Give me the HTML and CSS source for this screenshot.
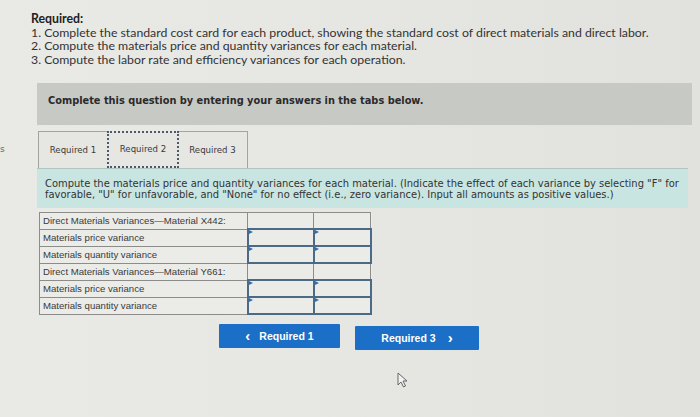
FILE: index.html
```html
<!DOCTYPE html>
<html>
<head>
<meta charset="utf-8">
<link rel="stylesheet" href="styles.css">
</head>
<body>
<div class="page">
  <div class="required">
    <div class="req-title">Required:</div>
    <div>1. Complete the standard cost card for each product, showing the standard cost of direct materials and direct labor.</div>
    <div>2. Compute the materials price and quantity variances for each material.</div>
    <div>3. Compute the labor rate and efficiency variances for each operation.</div>
  </div>
  <div class="main">
    <div class="side"><span class="side-text">s</span></div>
    <div class="card">
      <div class="banner">Complete this question by entering your answers in the tabs below.</div>
      <div class="tabs">
        <div class="tab">Required 1</div>
        <div class="tab active">Required 2</div>
        <div class="tab">Required 3</div>
      </div>
      <div class="instr">Compute the materials price and quantity variances for each material. (Indicate the effect of each variance by selecting "F" for favorable, "U" for unfavorable, and "None" for no effect (i.e., zero variance). Input all amounts as positive values.)</div>
      <table class="grid">
        <tr class="head"><td class="lbl">Direct Materials Variances—Material X442:</td><td></td><td></td></tr>
        <tr class="inp"><td class="lbl">Materials price variance</td><td class="in"><i></i></td><td class="in"><i></i></td></tr>
        <tr class="inp"><td class="lbl">Materials quantity variance</td><td class="in"><i></i></td><td class="in"><i></i></td></tr>
        <tr class="head"><td class="lbl">Direct Materials Variances—Material Y661:</td><td></td><td></td></tr>
        <tr class="inp"><td class="lbl">Materials price variance</td><td class="in"><i></i></td><td class="in"><i></i></td></tr>
        <tr class="inp"><td class="lbl">Materials quantity variance</td><td class="in"><i></i></td><td class="in"><i></i></td></tr>
      </table>
      <div class="navs">
        <div class="btn"><span class="chev">&lsaquo;</span><span>Required 1</span></div>
        <div class="btn"><span>Required 3</span><span class="chev">&rsaquo;</span></div>
      </div>
    </div>
  </div>
  <svg class="cursor" width="12" height="16" viewBox="0 0 12 16"><path d="M1 1 L1 13 L4 10 L6.5 15 L8.5 14 L6 9 L10 9 Z" fill="#f2f2f2" stroke="#666" stroke-width="1"/></svg>
</div>
</body>
</html>
```

FILE: styles.css
```css
html, body {
  margin: 0;
  padding: 0;
}
body {
  width: 700px;
  height: 417px;
  overflow: hidden;
  background: linear-gradient(90deg, #e9e9e6 0%, #e6e6e3 50%, #e1e1de 100%);
}
.page {
  position: relative;
  height: 417px;
  padding-top: 12px;
  box-sizing: border-box;
}
.required {
  padding-left: 31px;
  font-family: Lato, "Open Sans", sans-serif;
  font-size: 12.3px;
  line-height: 13.7px;
  color: #333;
}
.req-title {
  font-weight: bold;
  color: #222;
}
.main {
  display: flex;
  margin-top: 16px;
}
.side {
  width: 37px;
  flex: none;
}
.side-text {
  display: block;
  margin-top: 61px;
  font-family: "DejaVu Sans", sans-serif;
  font-size: 9px;
  color: #666;
}
.card {
  width: 655px;
}
.banner {
  height: 42px;
  background: #c7c9c5;
  box-sizing: border-box;
  padding: 12px 0 0 11px;
  font-family: "DejaVu Sans", Verdana, sans-serif;
  font-weight: bold;
  font-size: 9.8px;
  color: #2a2a2a;
}
.tabs {
  display: flex;
  margin-top: 6px;
  margin-left: 1px;
}
.tab {
  width: 70px;
  height: 37px;
  box-sizing: border-box;
  border: 1px solid #a3a3a0;
  border-bottom: none;
  display: flex;
  align-items: center;
  justify-content: center;
  font-family: "DejaVu Sans", Verdana, sans-serif;
  font-size: 8.6px;
  color: #3a3a3a;
  background: #e6e6e3;
}
.tab + .tab {
  border-left: none;
}
.tab.active {
  border: 2px dotted #4a5a6a;
  width: 72px;
  margin-left: -1px;
  margin-right: -1px;
  position: relative;
  z-index: 1;
}
.instr {
  width: 651px;
  height: 40px;
  box-sizing: border-box;
  background: #c9e5e1;
  border-top: 1px solid #b0c4c0;
  padding: 9px 0 0 8px;
  font-family: "DejaVu Sans", Verdana, sans-serif;
  font-size: 9.95px;
  line-height: 11px;
  color: #333;
}
.grid {
  margin: 4px 0 0 2px;
  border-collapse: collapse;
  background: #ebebe8;
  font-family: "Liberation Sans", Arial, sans-serif;
  font-size: 9.6px;
  color: #3a3a3a;
}
.grid td {
  height: 17px;
  padding: 0;
  border: 1px solid #8c8c8a;
  box-sizing: border-box;
}
.grid td.lbl {
  width: 208px;
  padding-left: 3px;
}
.grid td:nth-child(2) {
  width: 66px;
}
.grid td:nth-child(3) {
  width: 57px;
}
.grid td.in {
  border: 2px solid #4b6a88;
  position: relative;
}
.grid td.in i {
  position: absolute;
  left: 0;
  top: 0;
  width: 0;
  height: 0;
  border-top: 2px solid transparent;
  border-bottom: 2px solid transparent;
  border-left: 4px solid #2d6fb8;
}
.navs {
  display: flex;
  gap: 15px;
  margin: 9px 0 0 182px;
}
.btn {
  width: 121px;
  height: 24px;
  background: #1c6fc6;
  color: #fff;
  display: flex;
  align-items: center;
  justify-content: center;
  gap: 9px;
  font-family: "Liberation Sans", Arial, sans-serif;
  font-weight: bold;
  font-size: 10.5px;
  border-radius: 1px;
}
.btn + .btn {
  width: 124px;
  margin-top: 2px;
  gap: 12px;
}
.chev {
  font-size: 15px;
  line-height: 1;
  margin-top: -2px;
}
.cursor {
  position: absolute;
  left: 397px;
  top: 372px;
}
```
